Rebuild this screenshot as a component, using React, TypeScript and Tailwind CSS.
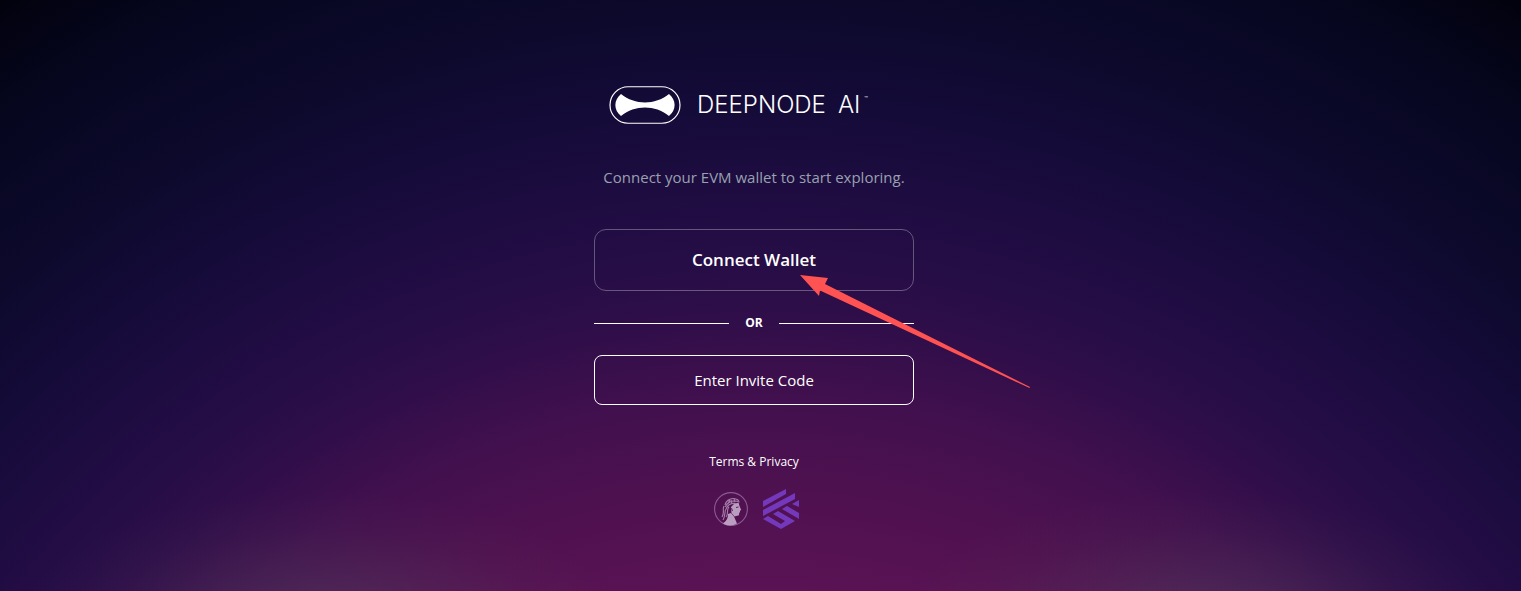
import React from 'react';

function LogoMark() {
  return (
    <svg className="h-[38px] w-[72px]" viewBox="0 0 72 38" fill="none" aria-hidden="true">
      <rect x="1" y="0.75" width="70" height="36.5" rx="18.25" stroke="white" strokeWidth="1.2" />
      <path
        d="M12 8C26 19.300 46 19.300 60 8C67.500 14 67.500 24 60 30C46 18.700 26 18.700 12 30C4.500 24 4.500 14 12 8Z"
        fill="white"
      />
    </svg>
  );
}

function PortraitIcon() {
  return (
    <svg className="h-[34px] w-[34px]" viewBox="0 0 34 34" fill="none" aria-hidden="true">
      <circle cx="17" cy="17" r="16.4" stroke="#8a5b90" strokeWidth="1.1" />
      {/* face */}
      <path
        d="M20 12L24.500 10.500L25.500 14L27.200 18L26 18.700L26 20L25.200 21L25 23.200L20.500 24.500L17.500 21L17 15Z"
        fill="#bb9dc0"
      />
      {/* neck and shoulders */}
      <path d="M14 22L17 21L20 24.500L23 31.500C19 34 13 34 9 31.500C12 29 14 27 14 22Z" fill="#bb9dc0" />
      {/* hair */}
      <path
        d="M11 13C12 8 18 5.500 22 7C24 7.500 25 9 25 10.500M11 15C14 10 19 8 24 9.500M12 17C14 12 18 11 22 11.500M14 11L16 8M18 12L17 8M21 10L20 7M10 14C8 18 11 20 8 25M12 17C10 20 12 23 9 28M15 15C12 18 15 21 12 25"
        stroke="#a47faa"
        strokeWidth="1.1"
      />
      <path d="M22 15.500L24.500 15M17.500 16L18.500 19" stroke="#5a2460" />
    </svg>
  );
}

function HexIcon() {
  return (
    <svg className="h-10 w-[36px]" viewBox="0 0 36 40" fill="#7438bd" aria-hidden="true">
      <path d="M0 12L23 0V5L0 18Z" />
      <path d="M0 21L32 4V10L0 27Z" />
      <path d="M36 11V18L29 15Z" />
      <path d="M19 20L24 17L36 24V30Z" />
      <path d="M0 30L5 27L18 35L22 32L10 25L15 22L32 32L18 40Z" />
    </svg>
  );
}

function PointerArrow() {
  return (
    <svg
      className="pointer-events-none absolute top-[46px] left-[206px] h-[114px] w-[232px]"
      viewBox="0 0 232 114"
      fill="#ff5252"
      aria-hidden="true"
    >
      <path d="M0 0L28 3L25 9L230 112L229.500 113L20 15.500L19 21Z" />
    </svg>
  );
}

export default function App() {
  return (
    <main className="min-h-screen bg-[radial-gradient(ellipse_300px_130px_at_21%_105%,rgba(90,105,105,0.32),rgba(90,105,105,0.18)_35%,rgba(90,105,105,0.06)_70%,transparent),radial-gradient(ellipse_300px_130px_at_79%_105%,rgba(90,105,105,0.32),rgba(90,105,105,0.18)_35%,rgba(90,105,105,0.06)_70%,transparent),radial-gradient(circle_at_50%_1180px,#5a1354_589px,#501150_680px,#42104e_780px,#300e49_860px,#260d46_920px,#1d0c40_1000px,#140b38_1080px,#0c092b_1180px,#06061f_1300px,#02020e_1400px)] pr-[13px] font-['Open_Sans','Noto_Sans',sans-serif] text-white">
      <div className="mx-auto flex w-80 flex-col items-center pt-[86px] pb-10">
        <div className="flex w-[290px] items-center gap-4">
          <LogoMark />
          <h1 className="flex items-start gap-1 font-['Inter',sans-serif] text-2xl leading-7 font-light whitespace-nowrap">
            <span>DEEPNODE</span>
            <span className="pl-2">AI</span>
            <span className="text-[6px] leading-4">™</span>
          </h1>
        </div>

        <p className="mt-[41px] text-[15px] leading-6 whitespace-nowrap text-gray-400">
          Connect your EVM wallet to start exploring.
        </p>

        <div className="relative mt-10 w-full">
          <button className="h-[62px] w-full rounded-xl border border-white/30 text-[17px] font-semibold">
            Connect Wallet
          </button>
          <PointerArrow />
        </div>

        <div className="mt-6 flex w-full items-center gap-4">
          <div className="h-px flex-1 bg-white" />
          <span className="text-xs leading-4 font-bold">OR</span>
          <div className="h-px flex-1 bg-white" />
        </div>

        <button className="mt-6 h-[50px] w-full rounded-lg border border-white text-[15px]">
          Enter Invite Code
        </button>

        <a href="#" className="mt-[49px] text-xs leading-4">Terms &amp; Privacy</a>

        <div className="mt-[19px] flex items-center gap-[15px] pl-[5px]">
          <PortraitIcon />
          <HexIcon />
        </div>
      </div>
    </main>
  );
}
